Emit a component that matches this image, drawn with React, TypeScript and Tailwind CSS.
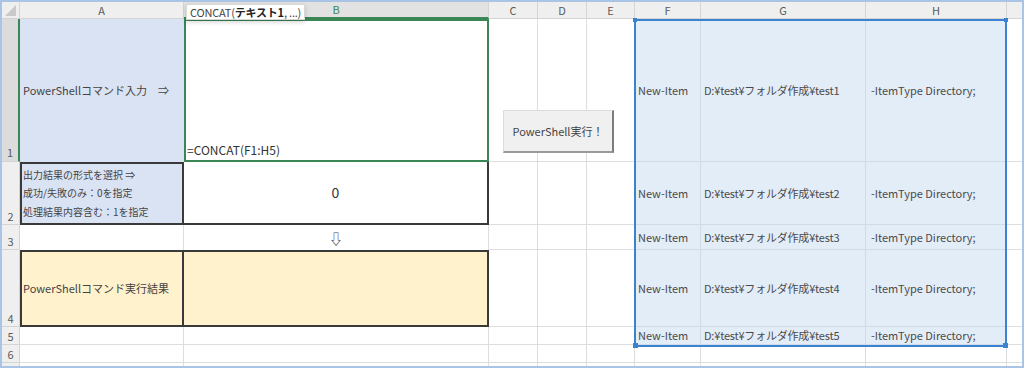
import React from 'react';

const cols = ['A', 'B', 'C', 'D', 'E', 'F', 'G', 'H'];
const grid = 'border-r border-b border-[#dedede]';
const dataGrid = 'border-r border-b border-[#cfdbe8] bg-[#e3edf8]';
const thick = 'border-[#3a3a3a]';

const rows = [
  { n: 1, h: 'h-[143px]' },
  { n: 2, h: 'h-[63px]' },
  { n: 3, h: 'h-[25px]' },
  { n: 4, h: 'h-[77px]' },
  { n: 5, h: 'h-[18px]' },
  { n: 6, h: 'h-[18px]' },
];

const DataCells: React.FC<{ n: number }> = ({ n }) => (
  <>
    <div className={`${dataGrid} flex items-center pl-[3px] text-[11px] text-[#4a4a4a]`}>New-Item</div>
    <div className={`${dataGrid} flex items-center pl-[3px] text-[11px] text-[#4a4a4a] tracking-[-0.2px]`}>D:¥test¥フォルダ作成¥test{n}</div>
    <div className={`${dataGrid} flex items-center pl-[5px] text-[11px] text-[#4a4a4a]`}>-ItemType Directory;</div>
  </>
);

const App: React.FC = () => {
  return (
    <div className="w-[1024px] h-[368px] overflow-hidden border-2 border-[#a9c4e4] bg-white font-['Noto_Sans_CJK_JP','Noto_Sans',sans-serif] text-[#444]">
      <div className="relative grid grid-cols-[18px_164px_305px_49px_49px_48px_66px_165px_141px_1fr] grid-rows-[17px_143px_63px_25px_77px_18px_18px_1fr] h-full">
        {/* column headers */}
        <div className="bg-[#efefef] border-r border-b border-[#d4d4d4] flex items-end justify-end pr-[2px] pb-[2px]">
          <svg width="12" height="11" viewBox="0 0 12 11">
            <polygon points="11,0 11,11 0,11" fill="#c9c9c9" />
          </svg>
        </div>
        {cols.map((c) => (
          <div
            key={c}
            className={
              c === 'B'
                ? 'bg-[#e2e2e2] border-r border-[#d4d4d4] border-b-2 border-b-[#3a8654] flex items-center justify-center text-[11px] text-[#3a8654]'
                : 'bg-[#efefef] border-r border-b border-[#d4d4d4] flex items-center justify-center text-[11px] text-[#5a5a5a]'
            }
          >
            {c}
          </div>
        ))}
        <div className="bg-[#efefef] border-b border-[#d4d4d4]" />

        {rows.map((r) => (
          <React.Fragment key={r.n}>
            <div
              className={
                r.n === 1
                  ? 'bg-[#dcdcdc] border-r-2 border-r-[#3a8654] border-b border-b-[#d4d4d4] flex items-end justify-center text-[11px] text-[#5a5a5a] pb-[1px]'
                  : 'bg-[#efefef] border-r border-b border-[#d4d4d4] flex items-end justify-center text-[11px] text-[#5a5a5a]'
              }
            >
              {r.n}
            </div>

            {r.n === 1 && (
              <>
                <div className="bg-[#dae3f3] flex items-center pl-[3px] text-[11px]">PowerShellコマンド入力　⇒</div>
                <div className="border-2 border-[#3a8654] flex items-end pl-[1px] pb-[1px] text-[12px] text-[#333]">=CONCAT(F1:H5)</div>
              </>
            )}
            {r.n === 2 && (
              <>
                <div className={`bg-[#dae3f3] border-2 ${thick} flex flex-col justify-center pl-[1px] text-[10px] leading-[18.5px]`}>
                  <span>出力結果の形式を選択 ⇒</span>
                  <span>成功/失敗のみ：0を指定</span>
                  <span>処理結果内容含む：1を指定</span>
                </div>
                <div className={`border-r-2 border-b-2 ${thick} flex items-center justify-center text-[14px] text-[#333]`}>0</div>
              </>
            )}
            {r.n === 3 && (
              <>
                <div className="border-r border-[#dedede]" />
                <div className="border-r border-[#dedede] flex items-center justify-center text-[14px] text-[#444] leading-none">⇩</div>
              </>
            )}
            {r.n === 4 && (
              <>
                <div className={`bg-[#fff2cc] border-2 ${thick} flex items-center pl-[1px] text-[11px]`}>PowerShellコマンド実行結果</div>
                <div className={`bg-[#fff2cc] border-y-2 border-r-2 ${thick}`} />
              </>
            )}
            {r.n >= 5 && (
              <>
                <div className={grid} />
                <div className={grid} />
              </>
            )}

            <div className={grid} />
            <div className={grid} />
            <div className={grid} />

            {r.n <= 5 ? (
              <DataCells n={r.n} />
            ) : (
              <>
                <div className={grid} />
                <div className={grid} />
                <div className={grid} />
              </>
            )}
            <div className="border-b border-[#dedede]" />
          </React.Fragment>
        ))}

        {/* bottom filler row */}
        <div className="bg-[#efefef] border-r border-[#d4d4d4]" />
        {cols.map((c) => (
          <div key={c} className="border-r border-[#dedede]" />
        ))}
        <div />

        {/* formula tooltip */}
        <div className="absolute left-[184px] top-[2px] h-[16px] px-[3px] bg-white border border-[#d8d8d8] shadow-[0_2px_5px_rgba(0,0,0,0.18)] flex items-center text-[11px] text-[#444] whitespace-nowrap tracking-[-0.2px]">
          CONCAT(<b className="font-bold text-[#222]">テキスト1</b>, ...)
        </div>

        {/* button shape */}
        <div className="absolute left-[501px] top-[108px] w-[111px] h-[43px] bg-[#f0f0f0] border border-[#dcdcdc] border-r-2 border-b-2 border-r-[#7c7c7c] border-b-[#9a9a9a] flex items-center justify-center text-[11px] text-[#444]">
          PowerShell実行！
        </div>

        {/* selection outline F1:H5 */}
        <div className="absolute left-[632px] top-[17px] w-[373px] h-[328px] border-2 border-[#3b82d0] pointer-events-none">
          <div className="absolute -left-[3px] -top-[3px] w-[4px] h-[4px] bg-[#3b82d0]" />
          <div className="absolute -right-[3px] -top-[3px] w-[4px] h-[4px] bg-[#3b82d0]" />
          <div className="absolute -left-[3px] -bottom-[3px] w-[5px] h-[5px] bg-[#3b82d0]" />
          <div className="absolute -right-[3px] -bottom-[3px] w-[5px] h-[5px] bg-[#3b82d0]" />
        </div>
      </div>
    </div>
  );
};

export default App;
